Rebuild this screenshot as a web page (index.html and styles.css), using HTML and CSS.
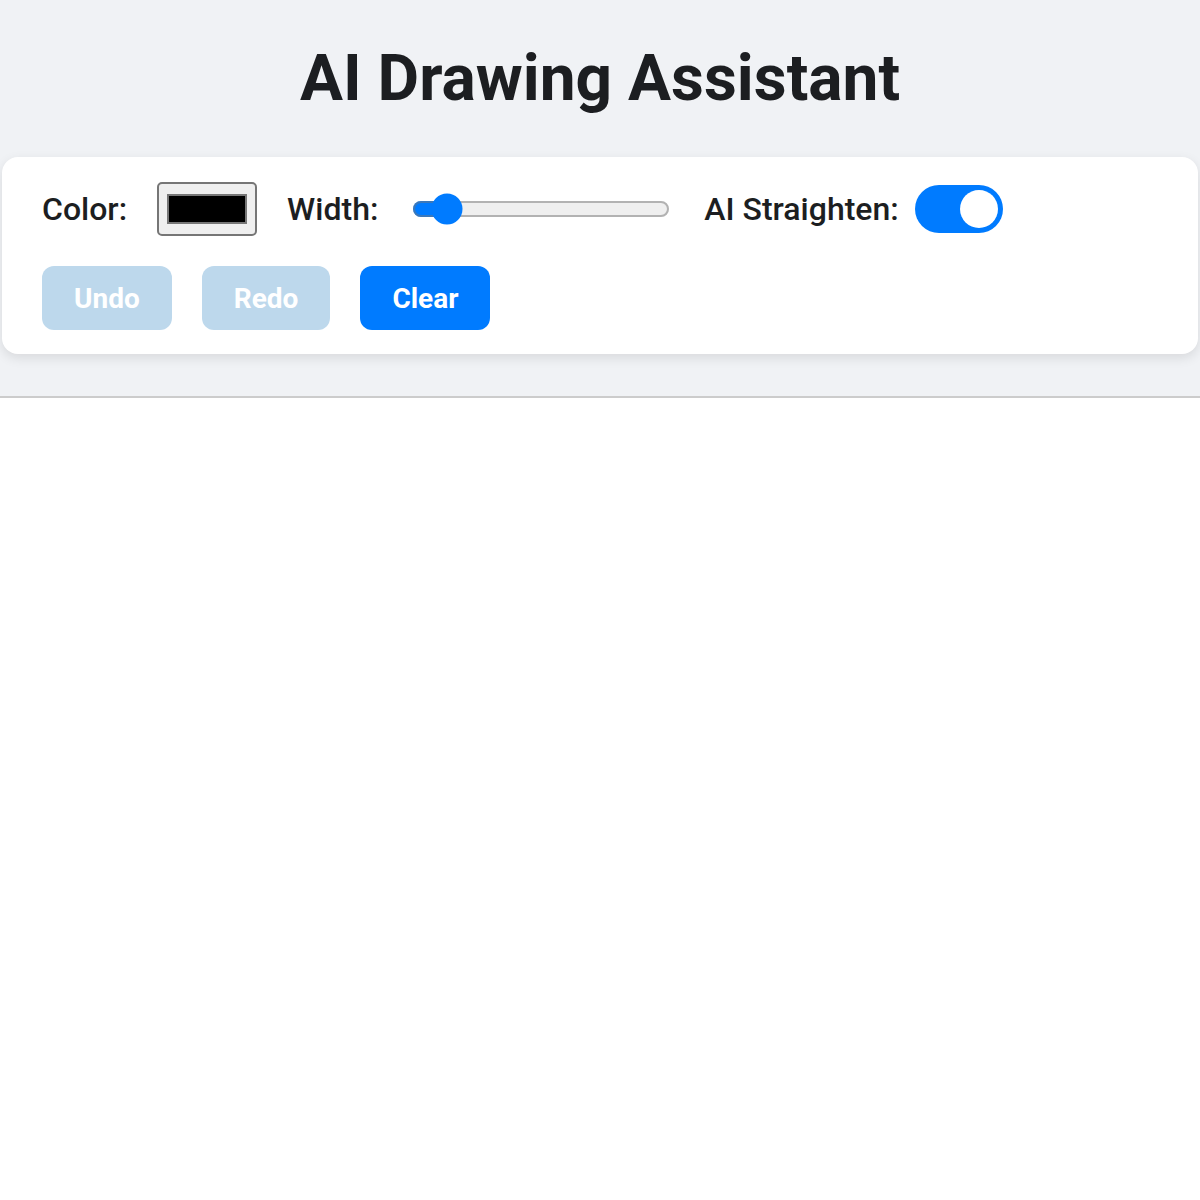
FILE: index.html
```html
<!DOCTYPE html>
<html lang="en">
<head>
<meta charset="utf-8">
<title>AI Drawing Assistant</title>
<link rel="stylesheet" href="styles.css">
</head>
<body>
  <h1 class="title">AI Drawing Assistant</h1>
  <div class="panel">
    <div class="row">
      <label class="label">Color:</label>
      <input class="color-input" type="color" value="#000000">
      <label class="label label-gap">Width:</label>
      <input class="range-input" type="range" min="1" max="100" value="9">
      <label class="label label-gap2">AI Straighten:</label>
      <div class="switch"><div class="knob"></div></div>
    </div>
    <div class="row buttons">
      <button class="btn btn-disabled" disabled>Undo</button>
      <button class="btn btn-disabled" disabled>Redo</button>
      <button class="btn btn-primary">Clear</button>
    </div>
  </div>
  <div class="canvas"></div>
</body>
</html>
```
FILE: styles.css
```css
html, body {
  margin: 0;
  padding: 0;
  height: 100%;
}
body {
  background: #f0f2f5;
  font-family: Roboto, "Liberation Sans", sans-serif;
  color: #1c1e21;
  display: flex;
  flex-direction: column;
}
.title {
  margin: 41px 0;
  font-size: 64px;
  font-weight: 700;
  line-height: 75px;
  text-align: center;
  color: #1c1e21;
}
.panel {
  margin: 0 2px 42px;
  background: #ffffff;
  border-radius: 16px;
  padding: 25px 40px 24px;
  box-shadow: 0 4px 12px rgba(0, 0, 0, 0.1);
  display: flex;
  flex-direction: column;
  gap: 30px;
}
.row {
  display: flex;
  align-items: center;
}
.label {
  font-size: 32px;
  font-weight: 500;
  line-height: 38px;
  margin-right: 30px;
}
.label-gap { margin-left: 30px; }
.label-gap2 { margin-left: 30px; margin-right: 16px; }
.color-input {
  zoom: 2;
  margin: 0;
}
.range-input {
  zoom: 2;
  margin: 2px;
  accent-color: #007bff;
}
.switch {
  width: 88px;
  height: 48px;
  border-radius: 24px;
  background: #007bff;
  display: flex;
  align-items: center;
  justify-content: flex-end;
  padding: 0 5px;
  box-sizing: border-box;
}
.knob {
  width: 38px;
  height: 38px;
  border-radius: 50%;
  background: #ffffff;
}
.buttons {
  gap: 30px;
}
.btn {
  height: 64px;
  padding: 0 32px;
  border: none;
  border-radius: 12px;
  font-family: Roboto, "Liberation Sans", sans-serif;
  font-size: 28px;
  font-weight: 700;
  color: #ffffff;
}
.btn-primary { background: #007bff; }
.btn-disabled { background: #bdd8ec; }
.canvas {
  flex: 1;
  background: #ffffff;
  border-top: 2px solid #cccccc;
}
```
